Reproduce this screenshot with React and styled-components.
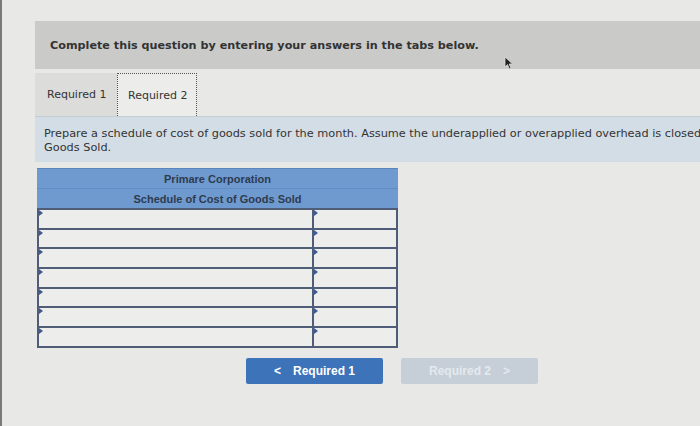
import React from 'react';
import styled, { createGlobalStyle } from 'styled-components';

const GlobalStyle = createGlobalStyle`
  html, body {
    margin: 0;
    padding: 0;
    background: #e8e8e6;
    overflow: hidden;
  }
  body {
    font-family: "DejaVu Sans", Verdana, sans-serif;
    color: #2e2e2e;
  }
`;

const Screen = styled.div`
  position: relative;
  width: 700px;
  height: 426px;
  border-left: 2px solid #7a7a7a;
  box-sizing: border-box;
  padding: 21px 0 0 33px;
  overflow: hidden;
`;

const Banner = styled.div`
  height: 48px;
  background: #cacac8;
  display: flex;
  align-items: center;
  padding-left: 15px;
  font-size: 11.2px;
  font-weight: bold;
  color: #333;
  margin-bottom: 4px;
`;

const TabBar = styled.div`
  display: flex;
  height: 43px;
`;

const Tab = styled.div`
  width: ${(p) => (p.$active ? '80px' : '82px')};
  box-sizing: border-box;
  display: flex;
  align-items: center;
  padding-left: ${(p) => (p.$active ? '10px' : '12px')};
  font-size: 11px;
  color: #333;
  background: ${(p) => (p.$active ? '#ececea' : '#dcdcda')};
  border: ${(p) => (p.$active ? '1px dotted #555' : 'none')};
  border-bottom: none;
`;

const Panel = styled.div`
  width: 720px;
  background: #d3dde5;
  border-top: 1px solid #c4ccd4;
  padding: 10px 0 0 9px;
  height: 46px;
  box-sizing: border-box;
  font-size: 11.3px;
  line-height: 14px;
  white-space: nowrap;
  color: #333;
`;

const Table = styled.div`
  margin: 6px 0 0 2px;
  width: 361px;
`;

const HeadRow = styled.div`
  height: 20px;
  background: #6e9ad0;
  border-top: ${(p) => (p.$first ? '1px solid #5c86bb' : '1px solid #628dc4')};
  box-sizing: border-box;
  display: flex;
  align-items: center;
  justify-content: center;
  font-family: "Liberation Sans", Arial, sans-serif;
  font-weight: bold;
  font-size: 11px;
  color: #2f3b4e;
`;

const Body = styled.div`
  border: 2px solid #4f5d78;
  border-top: none;
  background: #ededeb;
`;

const Row = styled.div`
  display: grid;
  grid-template-columns: 273px 1fr;
  height: 19.7px;
  border-top: 2px solid #4f5d78;
  box-sizing: border-box;
`;

const Cell = styled.div`
  position: relative;
  border-left: ${(p) => (p.$second ? '2px solid #4f5d78' : 'none')};
  &::before {
    content: '';
    position: absolute;
    left: 0;
    top: 0;
    border-left: 4px solid #3d5a93;
    border-top: 3px solid transparent;
    border-bottom: 3px solid transparent;
  }
`;

const Buttons = styled.div`
  display: flex;
  gap: 18px;
  margin: 10px 0 0 211px;
`;

const NavButton = styled.div`
  width: 137px;
  height: 26px;
  display: flex;
  align-items: center;
  justify-content: center;
  gap: 12px;
  font-family: "Liberation Sans", Arial, sans-serif;
  font-weight: bold;
  font-size: 12px;
  color: ${(p) => (p.$disabled ? '#e4e9ee' : '#ffffff')};
  background: ${(p) => (p.$disabled ? '#c6cfd8' : '#3d73b9')};
  border-radius: 2px;
`;

const Cursor = styled.svg`
  position: absolute;
  left: 502px;
  top: 56px;
`;

export default function App() {
  const rows = Array.from({ length: 7 });
  return (
    <>
      <GlobalStyle />
      <Screen>
        <Banner>Complete this question by entering your answers in the tabs below.</Banner>
        <TabBar>
          <Tab>Required 1</Tab>
          <Tab $active>Required 2</Tab>
        </TabBar>
        <Panel>
          Prepare a schedule of cost of goods sold for the month. Assume the underapplied or overapplied overhead is closed
          <br />
          Goods Sold.
        </Panel>
        <Table>
          <HeadRow $first>Primare Corporation</HeadRow>
          <HeadRow>Schedule of Cost of Goods Sold</HeadRow>
          <Body>
            {rows.map((_, i) => (
              <Row key={i}>
                <Cell />
                <Cell $second />
              </Row>
            ))}
          </Body>
        </Table>
        <Buttons>
          <NavButton>
            <span>&lt;</span>
            <span>Required 1</span>
          </NavButton>
          <NavButton $disabled>
            <span>Required 2</span>
            <span>&gt;</span>
          </NavButton>
        </Buttons>
        <Cursor width="10" height="14" viewBox="0 0 10 14">
          <path d="M1 1 L1 11 L3.5 8.6 L5.4 13 L7 12.3 L5.2 8 L8.6 8 Z" fill="#222" stroke="#ddd" strokeWidth="0.8" />
        </Cursor>
      </Screen>
    </>
  );
}
